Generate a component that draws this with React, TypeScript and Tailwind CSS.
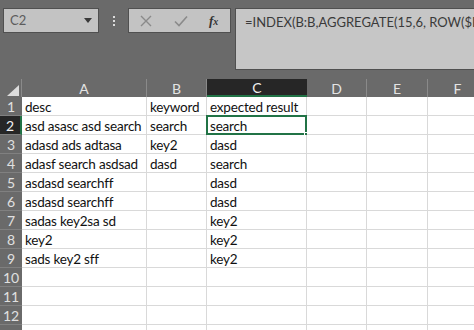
import React from 'react'

const COLS = ['A', 'B', 'C', 'D', 'E', 'F']
const WIDTHS = [125, 60, 100, 60, 61, 60]

const DATA: string[][] = [
  ['desc', 'keyword', 'expected result'],
  ['asd asasc asd search', 'search', 'search'],
  ['adasd ads adtasa', 'key2', 'dasd'],
  ['adasf search asdsad', 'dasd', 'search'],
  ['asdasd searchff', '', 'dasd'],
  ['asdasd searchff', '', 'dasd'],
  ['sadas key2sa sd', '', 'key2'],
  ['key2', '', 'key2'],
  ['sads key2 sff', '', 'key2'],
  ['', '', ''],
  ['', '', ''],
  ['', '', ''],
  ['', '', ''],
]

export default function App() {
  return (
    <div
      className="w-[474px] h-[330px] overflow-hidden bg-[#6a6a6a] text-[14px]"
      style={{ fontFamily: 'Lato, "Open Sans", sans-serif' }}
    >
      {/* ── Toolbar ─────────────────────────────────── */}
      <div className="h-[79px] flex items-start pt-[8px] pl-[3px]">
        <div className="w-[96px] h-[25px] bg-[#c3c3c3] border border-[#505050] flex items-center justify-between pl-[6px] pr-[6px] shrink-0">
          <span className="text-[#5c5c5c] text-[13px]">C2</span>
          <svg width="8" height="5" viewBox="0 0 8 5">
            <path d="M0 0 L8 0 L4 5 Z" fill="#3a3a3a" />
          </svg>
        </div>
        <div className="w-[29px] h-[25px] flex flex-col items-center justify-center gap-[2px] shrink-0">
          <span className="w-[2px] h-[2px] bg-[#dcdcdc]" />
          <span className="w-[2px] h-[2px] bg-[#dcdcdc]" />
          <span className="w-[2px] h-[2px] bg-[#dcdcdc]" />
        </div>
        <div className="w-[103px] h-[25px] bg-[#c3c3c3] border border-[#505050] flex items-center shrink-0">
          <svg width="12" height="12" viewBox="0 0 12 12" className="ml-[11px]">
            <path d="M1 1 L11 11 M11 1 L1 11" stroke="#8a8a8a" strokeWidth="1.4" />
          </svg>
          <svg width="14" height="12" viewBox="0 0 14 12" className="ml-[22px]">
            <path d="M1 6.5 L5 10.5 L13 1.5" stroke="#8a8a8a" strokeWidth="1.6" fill="none" />
          </svg>
          <span
            className="ml-[21px] text-[13px] italic font-bold text-[#333]"
            style={{ fontFamily: '"Liberation Serif", serif' }}
          >
            f<span className="text-[10px]">x</span>
          </span>
        </div>
        <div className="ml-[4px] h-[62px] flex-1 bg-[#c6c6c6] border border-[#505050] border-r-0 pl-[9px] pt-[4px] text-[#3a3a3a] text-[13px] whitespace-nowrap overflow-hidden">
          =INDEX(B:B,AGGREGATE(15,6, ROW($B$
        </div>
      </div>

      {/* ── Grid ───────────────────────────────────── */}
      <div className="grid grid-cols-[22px_125px_60px_100px_60px_61px_60px]">
        {/* column headers */}
        <div className="h-[18px] relative border-r border-[#8a8a8a]">
          <svg width="12" height="11" viewBox="0 0 12 11" className="absolute right-[2px] bottom-[1px]">
            <path d="M12 0 L12 11 L0 11 Z" fill="#dcdcdc" />
          </svg>
        </div>
        {COLS.map((c, i) => (
          <div
            key={c}
            className={
              c === 'C'
                ? 'h-[18px] flex items-center justify-center bg-[#262626] text-[#f0f0f0] border-b-2 border-[#217346]'
                : 'h-[18px] flex items-center justify-center text-[#e4e4e4] border-r border-[#8a8a8a]'
            }
            style={{ width: WIDTHS[i] }}
          >
            {c}
          </div>
        ))}

        {/* rows */}
        {DATA.map((row, r) => (
          <React.Fragment key={r}>
            <div
              className={
                r === 1
                  ? 'h-[19px] flex items-end pb-[1px] leading-[15px] justify-center bg-[#262626] text-[#f0f0f0] border-b border-[#808080] border-r-2 border-r-[#217346]'
                  : 'h-[19px] flex items-end pb-[1px] leading-[15px] justify-center text-[#e0e0e0] border-b border-[#808080]'
              }
            >
              {r + 1}
            </div>
            {COLS.map((c, ci) => {
              const selected = r === 1 && c === 'C'
              return (
                <div
                  key={c}
                  className="h-[19px] relative bg-white border-r border-b border-[#d9d9d9] flex items-end pl-[3px] leading-[15px] text-[#111] text-[13.5px] tracking-[-0.2px] whitespace-nowrap"
                >
                  {ci < 3 ? row[ci] : ''}
                  {selected && (
                    <>
                      <div className="absolute -left-[1px] -top-[1px] -right-[1px] -bottom-[1px] border-2 border-[#217346]" />
                      <div className="absolute -right-[3px] -bottom-[3px] w-[5px] h-[5px] bg-[#217346] border border-white" />
                    </>
                  )}
                </div>
              )
            })}
          </React.Fragment>
        ))}
      </div>
    </div>
  )
}
